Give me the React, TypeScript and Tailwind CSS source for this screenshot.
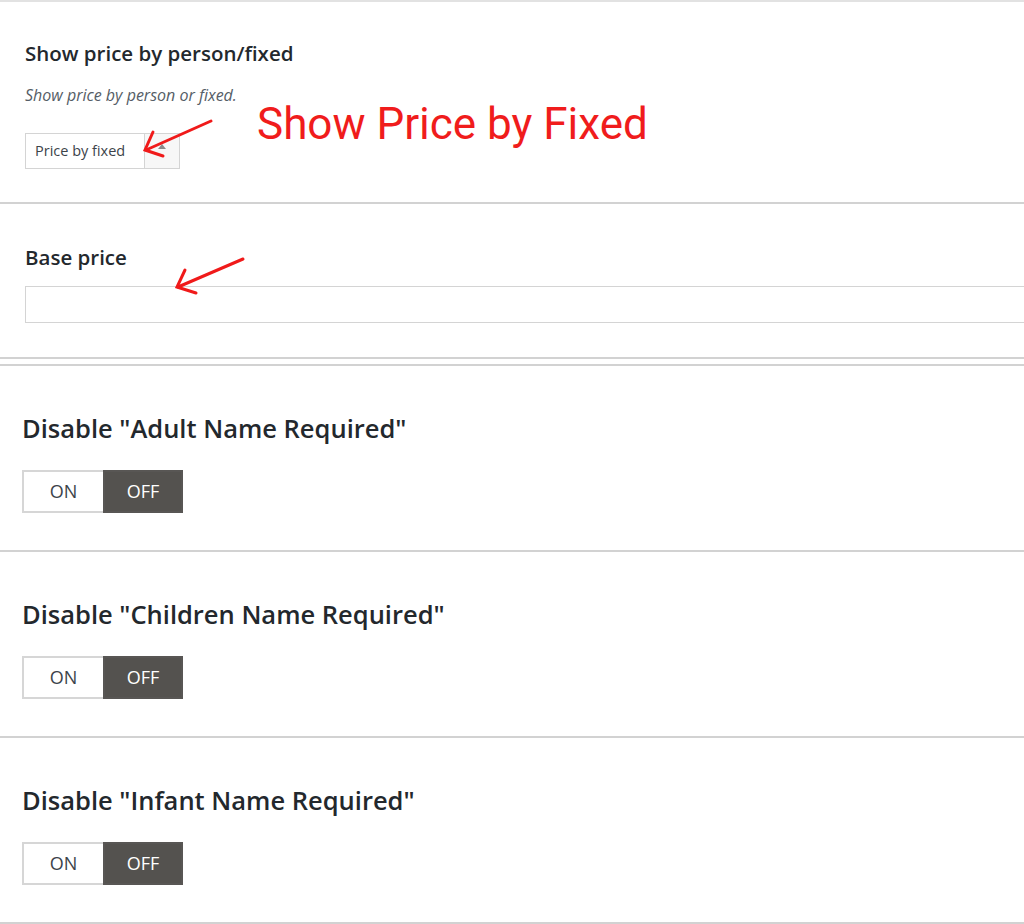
const font = { fontFamily: '"Open Sans", "Noto Sans", sans-serif' }

function Toggle() {
  return (
    <div className="mt-[26px] flex h-[43px] w-[161px]">
      <button
        type="button"
        className="flex h-full w-[81px] items-center justify-center border-2 border-r-0 border-[#d6d6d6] bg-white text-[18px] text-[#3c434a]"
      >
        ON
      </button>
      <button
        type="button"
        className="flex h-full w-[80px] items-center justify-center border-2 border-[#585654] bg-[#54524f] text-[18px] text-white"
      >
        OFF
      </button>
    </div>
  )
}

function ToggleSection({ label }: { label: string }) {
  return (
    <section className="border-b-2 border-[#d2d2d2] pb-[37px] pl-[22px] pt-[46px]">
      <h2 className="text-[25.5px] font-semibold leading-[32px] text-[#23282d]">{label}</h2>
      <Toggle />
    </section>
  )
}

export default function App() {
  return (
    <div className="relative h-[924px] w-[1024px] overflow-hidden bg-white" style={font}>
      <div className="w-[1060px] border-t-2 border-[#e2e2e2]">
        <section className="border-b-2 border-[#d2d2d2] pb-[33px] pl-[25px] pt-[39px]">
          <h3 className="text-[20.5px] font-semibold leading-[24px] text-[#23282d]">
            Show price by person/fixed
          </h3>
          <p className="mt-[20px] text-[16px] italic leading-[20px] text-[#555d66]">
            Show price by person or fixed.
          </p>
          <div className="mt-[28px] flex h-[36px] w-[155px] border border-[#d4d4d4]">
            <span className="flex w-[118px] items-center pl-[9px] text-[14.5px] text-[#3c434a]">
              Price by fixed
            </span>
            <span className="flex flex-1 items-center justify-center border-l border-[#d4d4d4] bg-[#f7f7f7]">
              <svg width="10" height="8" viewBox="0 0 10 8" className="-mt-[8px]">
                <path d="M5 1 L9 6 H1 Z" fill="#8a8a8a" />
              </svg>
            </span>
          </div>
        </section>

        <section className="border-b-2 border-[#d2d2d2] pb-[34px] pl-[25px] pt-[41px]">
          <h3 className="text-[20.5px] font-semibold leading-[24px] text-[#23282d]">Base price</h3>
          <input
            type="text"
            className="mt-[17px] block h-[37px] w-[1030px] border border-[#d4d4d4] bg-white outline-none"
          />
        </section>

        <div className="mt-[5px] border-t-2 border-[#d2d2d2]" />

        <ToggleSection label={'Disable "Adult Name Required"'} />
        <ToggleSection label={'Disable "Children Name Required"'} />
        <ToggleSection label={'Disable "Infant Name Required"'} />
      </div>

      {/* annotations */}
      <span
        className="absolute left-[257px] top-[98px] text-[44px] leading-[52px] text-[#f01c1c]"
        style={{ fontFamily: 'Roboto, "Liberation Sans", sans-serif' }}
      >
        Show Price by Fixed
      </span>
      <svg className="pointer-events-none absolute left-0 top-0" width="1024" height="924">
        <g stroke="#f01a1a" strokeWidth="3" strokeLinecap="round" fill="none">
          <path d="M211 121 L146 150" />
          <path d="M153 132 L145 150 L163 156" />
          <path d="M243 259 L178 287" />
          <path d="M185 270 L177 287 L196 293" />
        </g>
      </svg>
    </div>
  )
}
